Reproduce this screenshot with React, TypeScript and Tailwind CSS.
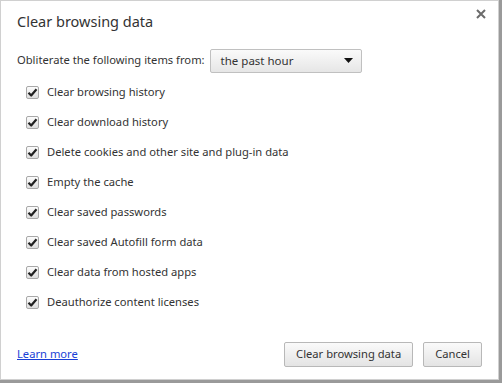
import React from "react";

const items = [
  "Clear browsing history",
  "Clear download history",
  "Delete cookies and other site and plug-in data",
  "Empty the cache",
  "Clear saved passwords",
  "Clear saved Autofill form data",
  "Clear data from hosted apps",
  "Deauthorize content licenses",
];

function Check() {
  return (
    <span className="flex h-[13px] w-[13px] items-center justify-center rounded-[2px] border border-[#a8a8a8] bg-gradient-to-b from-[#fcfcfc] to-[#dedede]">
      <svg width="11" height="11" viewBox="0 0 11 11">
        <path d="M1.5 5.8 L4.2 8.5 L9.5 2.2" fill="none" stroke="#222" strokeWidth="2.2" strokeLinejoin="round" />
      </svg>
    </span>
  );
}

export default function App() {
  return (
    <div className="h-[383px] w-[502px] bg-[#9a9a9a] font-['Noto_Sans',sans-serif] text-[11.2px] text-[#333]">
      <div className="relative flex h-[380px] w-[499px] flex-col border border-[#d0d0d0] bg-white">
        <div className="pl-4 pt-[10px] text-[14.5px] text-[#333]">Clear browsing data</div>
        <button className="absolute right-[12px] top-[8px] text-[#777]">
          <svg width="10" height="10" viewBox="0 0 10 10">
            <path d="M1 1 L9 9 M9 1 L1 9" stroke="#6b6b6b" strokeWidth="2" />
          </svg>
        </button>

        <div className="mt-[16px] flex items-center pl-4">
          <span>Obliterate the following items from:</span>
          <div className="ml-[5px] flex h-[24px] w-[152px] items-center justify-between rounded-[2px] border border-[#c0c0c0] bg-gradient-to-b from-[#fafafa] to-[#e6e6e6] pl-[10px] pr-[8px]">
            <span className="text-[11.5px]">the past hour</span>
            <svg width="9" height="5" viewBox="0 0 9 5">
              <path d="M0 0 H9 L4.5 5 Z" fill="#111" />
            </svg>
          </div>
        </div>

        <div className="mt-[5px] flex flex-col pl-[25px]">
          {items.map((t) => (
            <div key={t} className="flex h-[30px] items-center gap-[8px]">
              <Check />
              <span>{t}</span>
            </div>
          ))}
        </div>

        <div className="mt-auto mb-[12px] flex items-center pl-4 pr-[16px]">
          <a href="#" className="text-[#1a3fd6] underline">Learn more</a>
          <div className="ml-auto flex gap-[10px]">
            <button className="h-[25px] rounded-[2px] border border-[#b8b8b8] bg-gradient-to-b from-[#fafafa] to-[#e4e4e4] px-[11px] text-[#333]">
              Clear browsing data
            </button>
            <button className="h-[25px] rounded-[2px] border border-[#b8b8b8] bg-gradient-to-b from-[#fafafa] to-[#e4e4e4] px-[11px] text-[#333]">
              Cancel
            </button>
          </div>
        </div>
      </div>
    </div>
  );
}
